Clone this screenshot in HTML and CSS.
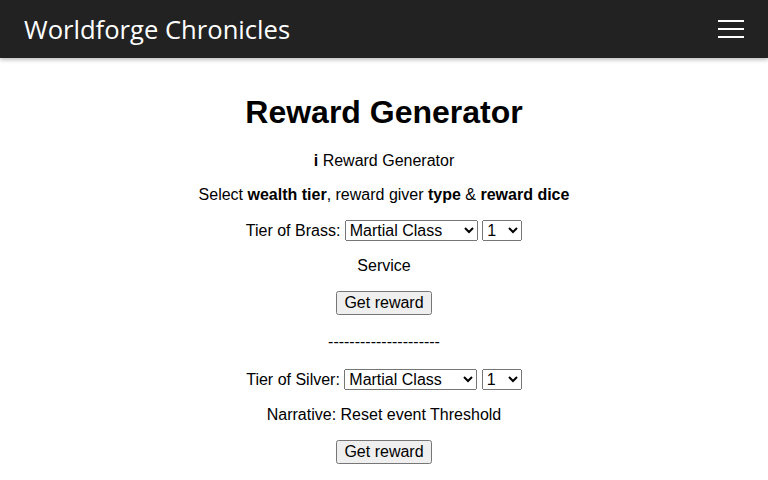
FILE: index.html
```html
<!DOCTYPE html>
<html lang="en">
<head>
    <meta charset="UTF-8">
    <meta name="viewport" content="width=device-width, initial-scale=1.0">
    <title>Reward Generator</title>
    <link rel="stylesheet" href="styles.css">
</head>
<body>
    <nav id="navbar">
        <span class="brand">Worldforge Chronicles</span>
        <button class="menu-toggle" aria-label="Menu">
            <svg width="26" height="18" viewBox="0 0 26 18">
                <path d="M0 1h26M0 9h26M0 17h26" stroke="#fff" stroke-width="2" fill="none"/>
            </svg>
        </button>
    </nav>
    <div id="main">
        <h1>Reward Generator</h1>
        <p><b>i</b> Reward Generator</p>
        <p>Select <b>wealth tier</b>, reward giver <b>type</b> &amp; <b>reward dice</b></p>

        <div class="tier">
            <p>
                Tier of Brass:
                <select class="giver">
                    <option>Martial Class</option>
                    <option>Arcane Class</option>
                    <option>Divine Class</option>
                </select>
                <select class="dice">
                    <option>1</option>
                    <option>2</option>
                    <option>3</option>
                </select>
            </p>
            <p class="result">Service</p>
            <button class="get-reward">Get reward</button>
        </div>

        <p class="divider">---------------------</p>

        <div class="tier">
            <p>
                Tier of Silver:
                <select class="giver">
                    <option>Martial Class</option>
                    <option>Arcane Class</option>
                    <option>Divine Class</option>
                </select>
                <select class="dice">
                    <option>1</option>
                    <option>2</option>
                    <option>3</option>
                </select>
            </p>
            <p class="result">Narrative: Reset event Threshold</p>
            <button class="get-reward">Get reward</button>
        </div>
    </div>
</body>
</html>
```

FILE: styles.css
```css
body {
    font-family: 'Liberation Sans', Arial, sans-serif;
    font-size: 16px;
    color: #000;
    background: #fff;
    margin: 0;
}

#navbar {
    display: flex;
    align-items: center;
    justify-content: space-between;
    height: 58px;
    padding: 0 24px;
    background: #222;
    box-shadow: 0 2px 4px rgba(0, 0, 0, 0.25);
}

.brand {
    font-family: 'Open Sans', sans-serif;
    font-size: 25.6px;
    color: #fff;
}

.menu-toggle {
    background: none;
    border: none;
    padding: 0;
    cursor: pointer;
}

.menu-toggle svg {
    display: block;
}

#main {
    text-align: center;
    padding-top: 15px;
}

h1 {
    font-size: 32px;
    margin: 21px 0;
}

p {
    margin: 16px 0;
}

select {
    font-family: 'Liberation Sans', Arial, sans-serif;
    font-size: 16px;
    color: #000;
}

.giver {
    width: 133px;
}

.dice {
    width: 40px;
}

.get-reward {
    font-family: 'Liberation Sans', Arial, sans-serif;
    font-size: 16px;
    color: #000;
}

.divider {
    margin: 18px 0;
}
```
